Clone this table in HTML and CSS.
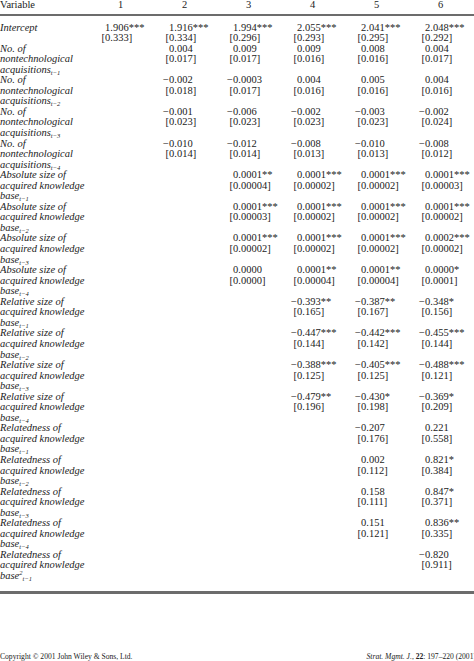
FILE: index.html
```html
<!DOCTYPE html>
<html>
<head>
<meta charset="utf-8">
<link rel="stylesheet" href="styles.css">
</head>
<body>
<div class="page">
  <div class="row head">
    <div class="lab up">Variable</div>
    <div class="h">1</div><div class="h">2</div><div class="h">3</div><div class="h">4</div><div class="h">5</div><div class="h">6</div>
  </div>
  <div class="rule top"></div>
  <div class="tbody">
    <div class="row">
      <div class="lab">Intercept</div>
      <div class="c">1.906***<br><span class="lb">[</span>0.333]</div>
      <div class="c">1.916***<br><span class="lb">[</span>0.334]</div>
      <div class="c">1.994***<br><span class="lb">[</span>0.296]</div>
      <div class="c">2.055***<br><span class="lb">[</span>0.293]</div>
      <div class="c">2.041***<br><span class="lb">[</span>0.295]</div>
      <div class="c">2.048***<br><span class="lb">[</span>0.292]</div>
    </div>
    <div class="row">
      <div class="lab">No. of<br>nontechnological<br>acquisitions<sub class="s">t−1</sub></div>
      <div class="c"></div>
      <div class="c">0.004<br><span class="lb">[</span>0.017]</div>
      <div class="c">0.009<br><span class="lb">[</span>0.017]</div>
      <div class="c">0.009<br><span class="lb">[</span>0.016]</div>
      <div class="c">0.008<br><span class="lb">[</span>0.016]</div>
      <div class="c">0.004<br><span class="lb">[</span>0.017]</div>
    </div>
    <div class="row">
      <div class="lab">No. of<br>nontechnological<br>acquisitions<sub class="s">t−2</sub></div>
      <div class="c"></div>
      <div class="c"><span class="m">−</span>0.002<br><span class="lb">[</span>0.018]</div>
      <div class="c"><span class="m">−</span>0.0003<br><span class="lb">[</span>0.017]</div>
      <div class="c">0.004<br><span class="lb">[</span>0.016]</div>
      <div class="c">0.005<br><span class="lb">[</span>0.016]</div>
      <div class="c">0.004<br><span class="lb">[</span>0.016]</div>
    </div>
    <div class="row">
      <div class="lab">No. of<br>nontechnological<br>acquisitions<sub class="s">t−3</sub></div>
      <div class="c"></div>
      <div class="c"><span class="m">−</span>0.001<br><span class="lb">[</span>0.023]</div>
      <div class="c"><span class="m">−</span>0.006<br><span class="lb">[</span>0.023]</div>
      <div class="c"><span class="m">−</span>0.002<br><span class="lb">[</span>0.023]</div>
      <div class="c"><span class="m">−</span>0.003<br><span class="lb">[</span>0.023]</div>
      <div class="c"><span class="m">−</span>0.002<br><span class="lb">[</span>0.024]</div>
    </div>
    <div class="row">
      <div class="lab">No. of<br>nontechnological<br>acquisitions<sub class="s">t−4</sub></div>
      <div class="c"></div>
      <div class="c"><span class="m">−</span>0.010<br><span class="lb">[</span>0.014]</div>
      <div class="c"><span class="m">−</span>0.012<br><span class="lb">[</span>0.014]</div>
      <div class="c"><span class="m">−</span>0.008<br><span class="lb">[</span>0.013]</div>
      <div class="c"><span class="m">−</span>0.010<br><span class="lb">[</span>0.013]</div>
      <div class="c"><span class="m">−</span>0.008<br><span class="lb">[</span>0.012]</div>
    </div>
    <div class="row">
      <div class="lab">Absolute size of<br>acquired knowledge<br>base<sub class="s">t−1</sub></div>
      <div class="c"></div><div class="c"></div>
      <div class="c">0.0001**<br><span class="lb">[</span>0.00004]</div>
      <div class="c">0.0001***<br><span class="lb">[</span>0.00002]</div>
      <div class="c">0.0001***<br><span class="lb">[</span>0.00002]</div>
      <div class="c">0.0001***<br><span class="lb">[</span>0.00003]</div>
    </div>
    <div class="row">
      <div class="lab">Absolute size of<br>acquired knowledge<br>base<sub class="s">t−2</sub></div>
      <div class="c"></div><div class="c"></div>
      <div class="c">0.0001***<br><span class="lb">[</span>0.00003]</div>
      <div class="c">0.0001***<br><span class="lb">[</span>0.00002]</div>
      <div class="c">0.0001***<br><span class="lb">[</span>0.00002]</div>
      <div class="c">0.0001***<br><span class="lb">[</span>0.00002]</div>
    </div>
    <div class="row">
      <div class="lab">Absolute size of<br>acquired knowledge<br>base<sub class="s">t−3</sub></div>
      <div class="c"></div><div class="c"></div>
      <div class="c">0.0001***<br><span class="lb">[</span>0.00002]</div>
      <div class="c">0.0001***<br><span class="lb">[</span>0.00002]</div>
      <div class="c">0.0001***<br><span class="lb">[</span>0.00002]</div>
      <div class="c">0.0002***<br><span class="lb">[</span>0.00002]</div>
    </div>
    <div class="row">
      <div class="lab">Absolute size of<br>acquired knowledge<br>base<sub class="s">t−4</sub></div>
      <div class="c"></div><div class="c"></div>
      <div class="c">0.0000<br><span class="lb">[</span>0.0000]</div>
      <div class="c">0.0001**<br><span class="lb">[</span>0.00004]</div>
      <div class="c">0.0001**<br><span class="lb">[</span>0.00004]</div>
      <div class="c">0.0000*<br><span class="lb">[</span>0.0001]</div>
    </div>
    <div class="row">
      <div class="lab">Relative size of<br>acquired knowledge<br>base<sub class="s">t−1</sub></div>
      <div class="c"></div><div class="c"></div><div class="c"></div>
      <div class="c"><span class="m">−</span>0.393**<br><span class="lb">[</span>0.165]</div>
      <div class="c"><span class="m">−</span>0.387**<br><span class="lb">[</span>0.167]</div>
      <div class="c"><span class="m">−</span>0.348*<br><span class="lb">[</span>0.156]</div>
    </div>
    <div class="row">
      <div class="lab">Relative size of<br>acquired knowledge<br>base<sub class="s">t−2</sub></div>
      <div class="c"></div><div class="c"></div><div class="c"></div>
      <div class="c"><span class="m">−</span>0.447***<br><span class="lb">[</span>0.144]</div>
      <div class="c"><span class="m">−</span>0.442***<br><span class="lb">[</span>0.142]</div>
      <div class="c"><span class="m">−</span>0.455***<br><span class="lb">[</span>0.144]</div>
    </div>
    <div class="row">
      <div class="lab">Relative size of<br>acquired knowledge<br>base<sub class="s">t−3</sub></div>
      <div class="c"></div><div class="c"></div><div class="c"></div>
      <div class="c"><span class="m">−</span>0.388***<br><span class="lb">[</span>0.125]</div>
      <div class="c"><span class="m">−</span>0.405***<br><span class="lb">[</span>0.125]</div>
      <div class="c"><span class="m">−</span>0.488***<br><span class="lb">[</span>0.121]</div>
    </div>
    <div class="row">
      <div class="lab">Relative size of<br>acquired knowledge<br>base<sub class="s">t−4</sub></div>
      <div class="c"></div><div class="c"></div><div class="c"></div>
      <div class="c"><span class="m">−</span>0.479**<br><span class="lb">[</span>0.196]</div>
      <div class="c"><span class="m">−</span>0.430*<br><span class="lb">[</span>0.198]</div>
      <div class="c"><span class="m">−</span>0.369*<br><span class="lb">[</span>0.209]</div>
    </div>
    <div class="row">
      <div class="lab">Relatedness of<br>acquired knowledge<br>base<sub class="s">t−1</sub></div>
      <div class="c"></div><div class="c"></div><div class="c"></div><div class="c"></div>
      <div class="c"><span class="m">−</span>0.207<br><span class="lb">[</span>0.176]</div>
      <div class="c">0.221<br><span class="lb">[</span>0.558]</div>
    </div>
    <div class="row">
      <div class="lab">Relatedness of<br>acquired knowledge<br>base<sub class="s">t−2</sub></div>
      <div class="c"></div><div class="c"></div><div class="c"></div><div class="c"></div>
      <div class="c">0.002<br><span class="lb">[</span>0.112]</div>
      <div class="c">0.821*<br><span class="lb">[</span>0.384]</div>
    </div>
    <div class="row">
      <div class="lab">Relatedness of<br>acquired knowledge<br>base<sub class="s">t−3</sub></div>
      <div class="c"></div><div class="c"></div><div class="c"></div><div class="c"></div>
      <div class="c">0.158<br><span class="lb">[</span>0.111]</div>
      <div class="c">0.847*<br><span class="lb">[</span>0.371]</div>
    </div>
    <div class="row">
      <div class="lab">Relatedness of<br>acquired knowledge<br>base<sub class="s">t−4</sub></div>
      <div class="c"></div><div class="c"></div><div class="c"></div><div class="c"></div>
      <div class="c">0.151<br><span class="lb">[</span>0.121]</div>
      <div class="c">0.836**<br><span class="lb">[</span>0.335]</div>
    </div>
    <div class="row">
      <div class="lab">Relatedness of<br>acquired knowledge<br>base<sup class="p">2</sup><sub class="s">t−1</sub></div>
      <div class="c"></div><div class="c"></div><div class="c"></div><div class="c"></div><div class="c"></div>
      <div class="c"><span class="m">−</span>0.820<br><span class="lb">[</span>0.911]</div>
    </div>
  </div>
  <div class="rule bottom"></div>
  <div class="foot">
    <span>Copyright © 2001 John Wiley &amp; Sons, Ltd.</span>
    <span class="cite"><i>Strat. Mgmt. J.</i>, <b>22</b>: 197–220 (2001)</span>
  </div>
</div>
</body>
</html>
```

FILE: styles.css
```css
html, body {
  margin: 0;
  padding: 0;
  background: #ffffff;
}
.page {
  width: 474px;
  height: 661px;
  overflow: hidden;
  font-family: "Liberation Serif", "Times New Roman", serif;
  font-size: 10.5px;
  line-height: 10.55px;
  color: #222222;
}
.row {
  display: grid;
  grid-template-columns: 100px repeat(6, 64px);
}
.head {
  margin-top: 0;
}
.lab {
  font-style: italic;
  white-space: nowrap;
  padding-left: 0;
}
.lab.up {
  font-style: normal;
}
.h {
  padding-left: 18px;
}
.c {
  padding-left: 5px;
  white-space: nowrap;
}
.lb {
  margin-left: -0.333em;
}
.m {
  margin-left: -0.564em;
}
.s {
  font-size: 6.5px;
  line-height: 0;
  vertical-align: -1.5px;
}
.p {
  font-size: 6.5px;
  line-height: 0;
  vertical-align: 4px;
}
.rule {
  height: 2.5px;
  background: #6c6c6c;
}
.rule.top {
  margin-top: 3px;
}
.tbody {
  margin-top: 6.5px;
}
.rule.bottom {
  margin-top: 9.8px;
}
.foot {
  margin-top: 58px;
  margin-right: -2px;
  display: flex;
  justify-content: space-between;
  font-size: 7.6px;
  line-height: 9px;
  white-space: nowrap;
}
```
